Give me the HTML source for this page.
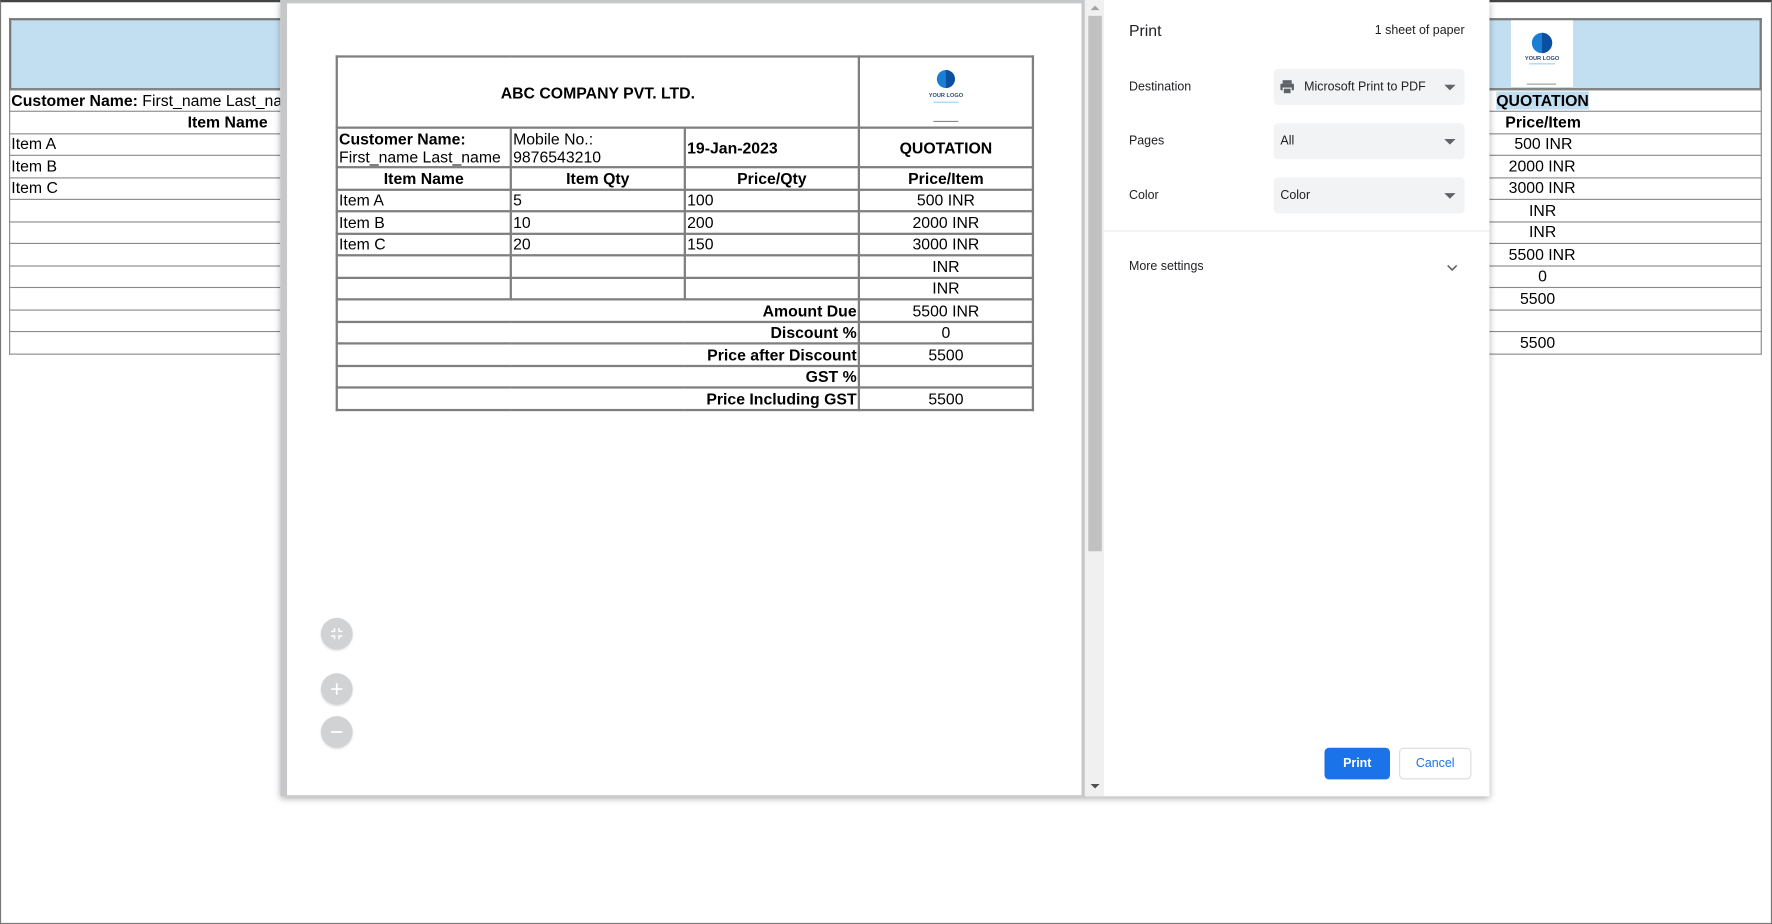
<!DOCTYPE html>
<html><head><meta charset="utf-8"><style>
*{margin:0;padding:0;box-sizing:border-box}
html,body{width:1772px;height:924px;overflow:hidden;background:#fff}
#c{position:absolute;left:0;top:0;width:1568px;height:818px;transform:scale(1.1301,1.1296);transform-origin:0 0;font-family:"Liberation Sans",Arial,sans-serif;color:#000;overflow:hidden}
.a{position:absolute}
table{border-collapse:collapse;table-layout:fixed}
.bg td{border:1px solid #8a8a8a;height:19.5px;font-size:14px;padding:0 1px;white-space:nowrap;overflow:hidden;line-height:17px}
.pv td{border:2px solid #7f7f7f;font-size:14px;padding:0 1px;white-space:nowrap;overflow:hidden;line-height:16px;height:19.5px}
.b{font-weight:bold}.c{text-align:center}.r{text-align:right}
.lab{font-size:11px;color:#202124}
.sel{position:absolute;left:1127px;width:169px;height:32px;background:#f1f3f4;border-radius:4px;font-size:11px;color:#202124;line-height:32px;padding-left:6px}
.sel i{position:absolute;right:8px;top:14px;width:0;height:0;border-left:5px solid transparent;border-right:5px solid transparent;border-top:5px solid #5f6368}
.zb{position:absolute;left:284px;width:28px;height:28px;border-radius:50%;background:#d1d2d4;box-shadow:0 1px 2px rgba(0,0,0,.15)}
</style></head><body><div id="c">
<div class="a" style="left:0;top:0;width:1568px;height:818px;border:1px solid #7a7a7a;border-top:2px solid #444"></div>

<div class="a" style="left:8px;top:16px;width:241px;height:64px;background:#c2dff2;border:2px solid #7a7a7a;border-right:none"></div>
<table class="a bg" style="left:8px;top:79px;width:260px">
<tr><td style="height:19px"><b>Customer Name:</b> First_name Last_name</td></tr>
<tr><td class="b" style="padding-left:157px">Item Name</td></tr>
<tr><td>Item A</td></tr><tr><td>Item B</td></tr><tr><td>Item C</td></tr>
<tr><td></td></tr><tr><td></td></tr><tr><td></td></tr><tr><td></td></tr><tr><td></td></tr><tr><td></td></tr><tr><td></td></tr>
</table>

<div class="a" style="left:1300px;top:16px;width:259px;height:64px;background:#c2dff2;border:2px solid #7a7a7a;border-left:none"></div>
<div class="a" style="left:1337px;top:18px;width:55px;height:59px;background:#fff">
<svg width="55" height="59" viewBox="0 0 55 59"><circle cx="27.5" cy="20" r="9" fill="#1a7fd4"/><path d="M27.5 11a9 9 0 0 1 9 9a9 9 0 0 1-9 9z" fill="#0b4fa0"/><text x="27.5" y="35" font-size="5" font-family="Liberation Sans" font-weight="bold" fill="#2b4a70" text-anchor="middle">YOUR LOGO</text><rect x="16" y="38" width="23" height="1" fill="#9cd0f0"/><rect x="14" y="56" width="26" height="1" fill="#999"/></svg></div>
<table class="a bg" style="left:1300px;top:79px;width:259px">
<tr><td style="height:19px;padding-left:23px"><span class="b" style="background:#c2dff2">QUOTATION</span></td></tr>
<tr><td class="b" style="padding-left:31px">Price/Item</td></tr>
<tr><td style="padding-left:39px">500 INR</td></tr>
<tr><td style="padding-left:34px">2000 INR</td></tr>
<tr><td style="padding-left:34px">3000 INR</td></tr>
<tr><td style="padding-left:52px">INR</td></tr>
<tr><td style="padding-left:52px">INR</td></tr>
<tr><td style="padding-left:34px">5500 INR</td></tr>
<tr><td style="padding-left:60px">0</td></tr>
<tr><td style="padding-left:44px">5500</td></tr>
<tr><td></td></tr>
<tr><td style="padding-left:44px">5500</td></tr>
</table>

<div class="a" style="left:248px;top:0;width:1070px;height:705px;background:#fff;box-shadow:0 2px 6px rgba(0,0,0,.35)"></div>
<div class="a" style="left:248px;top:0;width:712px;height:705px;background:#c6c7c9"></div>
<div class="a" style="left:254px;top:3px;width:703px;height:701px;background:#fff"></div>
<div class="a" style="left:960px;top:0;width:17px;height:705px;background:#f0f0f0"></div>
<div class="a" style="left:963px;top:14px;width:12px;height:474px;background:#c1c1c1"></div>
<div class="a" style="left:965px;top:5px;width:0;height:0;border-left:4px solid transparent;border-right:4px solid transparent;border-bottom:4px solid #a3a3a3"></div>
<div class="a" style="left:965px;top:694px;width:0;height:0;border-left:4px solid transparent;border-right:4px solid transparent;border-top:4px solid #505050"></div>

<table class="a pv" style="left:297px;top:49px;width:616px">
<colgroup><col style="width:154px"><col style="width:154px"><col style="width:154px"><col style="width:154px"></colgroup>
<tr><td colspan="3" class="b c" style="height:62px;font-size:14px">ABC COMPANY PVT. LTD.</td>
<td style="height:62px;padding:0"><svg width="150" height="58" viewBox="0 0 150 58"><circle cx="76" cy="19" r="8" fill="#1a7fd4"/><path d="M76 11a8 8 0 0 1 8 8a8 8 0 0 1-8 8z" fill="#0b4fa0"/><text x="76" y="35" font-size="5" font-family="Liberation Sans" font-weight="bold" fill="#2b4a70" text-anchor="middle">YOUR LOGO</text><rect x="65" y="39" width="22" height="1" fill="#9cd0f0"/><rect x="65" y="56" width="22" height="1" fill="#888"/></svg></td></tr>
<tr><td style="height:35px;line-height:16px"><b>Customer Name:</b><br>First_name Last_name</td><td style="height:35px;line-height:16px">Mobile No.:<br>9876543210</td><td class="b">19-Jan-2023</td><td class="b c">QUOTATION</td></tr>
<tr><td class="b c">Item Name</td><td class="b c">Item Qty</td><td class="b c">Price/Qty</td><td class="b c">Price/Item</td></tr>
<tr><td>Item A</td><td>5</td><td>100</td><td class="c">500 INR</td></tr>
<tr><td>Item B</td><td>10</td><td>200</td><td class="c">2000 INR</td></tr>
<tr><td>Item C</td><td>20</td><td>150</td><td class="c">3000 INR</td></tr>
<tr><td></td><td></td><td></td><td class="c">INR</td></tr>
<tr><td></td><td></td><td></td><td class="c">INR</td></tr>
<tr><td colspan="3" class="b r">Amount Due</td><td class="c">5500 INR</td></tr>
<tr><td colspan="3" class="b r">Discount %</td><td class="c">0</td></tr>
<tr><td colspan="3" class="b r">Price after Discount</td><td class="c">5500</td></tr>
<tr><td colspan="3" class="b r">GST %</td><td class="c"></td></tr>
<tr><td colspan="3" class="b r">Price Including GST</td><td class="c">5500</td></tr>
</table>

<div class="zb" style="top:547px"><svg width="28" height="28" viewBox="0 0 28 28" fill="none" stroke="#fff" stroke-width="1.3"><path d="M12 9v3H9M16 9v3h3M12 19v-3H9M16 19v-3h3"/></svg></div>
<div class="zb" style="top:596px"><svg width="28" height="28" viewBox="0 0 28 28" stroke="#fff" stroke-width="1.5"><path d="M14 9v10M9 14h10"/></svg></div>
<div class="zb" style="top:634px"><svg width="28" height="28" viewBox="0 0 28 28" stroke="#fff" stroke-width="1.5"><path d="M9 14h10"/></svg></div>

<div class="a" style="left:999px;top:19px;font-size:14px;color:#202124">Print</div>
<div class="a" style="left:1150px;width:146px;text-align:right;top:21px;font-size:11px;color:#202124">1 sheet of paper</div>
<div class="a lab" style="left:999px;top:71px">Destination</div>
<div class="a lab" style="left:999px;top:119px">Pages</div>
<div class="a lab" style="left:999px;top:167px">Color</div>
<div class="sel" style="top:61px;padding-left:27px"><svg class="a" style="left:5px;top:9px" width="14" height="14" viewBox="0 0 14 14"><rect x="3" y="1" width="8" height="3" fill="#5f6368"/><rect x="1" y="4" width="12" height="6" rx="1" fill="#5f6368"/><rect x="3.5" y="8" width="7" height="5" fill="#5f6368" stroke="#f1f3f4" stroke-width="1"/></svg>Microsoft Print to PDF<i></i></div>
<div class="sel" style="top:109px">All<i></i></div>
<div class="sel" style="top:157px">Color<i></i></div>
<div class="a" style="left:977px;top:204px;width:341px;height:1px;background:#e8eaed"></div>
<div class="a lab" style="left:999px;top:230px">More settings</div>
<svg class="a" style="left:1280px;top:233px" width="10" height="8" viewBox="0 0 10 8"><path d="M1 2l4 4 4-4" fill="none" stroke="#5f6368" stroke-width="1.4"/></svg>
<div class="a" style="left:1172px;top:662px;width:58px;height:28px;background:#1a73e8;border-radius:4px;color:#fff;font-size:11px;font-weight:bold;text-align:center;line-height:28px">Print</div>
<div class="a" style="left:1238px;top:662px;width:64px;height:28px;background:#fff;border:1px solid #dadce0;border-radius:4px;color:#1a73e8;font-size:11px;text-align:center;line-height:26px">Cancel</div>
</div></body></html>
